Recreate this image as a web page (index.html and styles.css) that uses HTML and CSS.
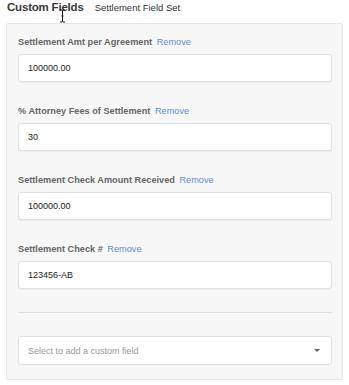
FILE: index.html
```html
<!DOCTYPE html>
<html>
<head>
<meta charset="utf-8">
<link rel="stylesheet" href="styles.css">
</head>
<body>
<div class="page">
  <div class="header">
    <span class="title">Custom Fields</span>
    <span class="subtitle">Settlement Field Set</span>
    <svg class="cursor" width="7" height="14" viewBox="0 0 7 14"><path d="M1 1h2l0.5 0.5L4 1h2M3.5 1.5v11M1 13h2l0.5-0.5L4 13h2M2.5 7h2" stroke="#111" stroke-width="1" fill="none"/></svg>
  </div>
  <div class="panel">
    <div class="field">
      <div class="label">Settlement Amt per Agreement <a class="remove">Remove</a></div>
      <div class="input">100000.00</div>
    </div>
    <div class="field">
      <div class="label">% Attorney Fees of Settlement <a class="remove">Remove</a></div>
      <div class="input">30</div>
    </div>
    <div class="field">
      <div class="label">Settlement Check Amount Received <a class="remove">Remove</a></div>
      <div class="input">100000.00</div>
    </div>
    <div class="field">
      <div class="label">Settlement Check # <a class="remove">Remove</a></div>
      <div class="input">123456-AB</div>
    </div>
    <div class="divider"></div>
    <div class="select">
      <span class="placeholder">Select to add a custom field</span>
      <span class="caret"></span>
    </div>
  </div>
</div>
</body>
</html>
```
FILE: styles.css
```css
html, body {
  margin: 0;
  padding: 0;
  background: #ffffff;
}
body {
  font-family: "Liberation Sans", Arial, sans-serif;
  color: #333;
}
.page {
  width: 349px;
  height: 385px;
  position: relative;
}
.header {
  position: relative;
  display: flex;
  align-items: baseline;
  height: 23px;
  padding-left: 7px;
  box-sizing: border-box;
  padding-top: 1px;
}
.title {
  font-size: 11.5px;
  font-weight: bold;
  color: #3a3a3a;
  letter-spacing: -0.2px;
}
.subtitle {
  font-size: 9.5px;
  color: #333;
  margin-left: 11px;
}
.cursor {
  position: absolute;
  left: 59px;
  top: 9px;
}
.panel {
  margin-left: 6px;
  width: 337px;
  height: 357px;
  box-sizing: border-box;
  background: #f7f7f7;
  border: 1px solid #e6e6e6;
  border-radius: 2px;
  padding: 12px 10px 0 11px;
}
.field {
  margin-bottom: 23px;
}
.label {
  height: 12px;
  line-height: 12px;
  font-size: 9.2px;
  font-weight: bold;
  color: #666;
  margin-bottom: 6px;
  white-space: nowrap;
}
.remove {
  font-weight: normal;
  color: #5b8fd3;
  margin-left: 2px;
}
.input {
  height: 28px;
  box-sizing: border-box;
  background: #fff;
  border: 1px solid #e0e0e0;
  border-radius: 3px;
  box-shadow: 0 1px 1px rgba(0,0,0,0.04);
  font-size: 9px;
  color: #222;
  padding-left: 9px;
  display: flex;
  align-items: center;
}
.divider {
  border-top: 1px solid #dedede;
  margin-top: 1px;
  margin-bottom: 23px;
}
.select {
  height: 29px;
  box-sizing: border-box;
  background: #fff;
  border: 1px solid #e0e0e0;
  border-radius: 3px;
  display: flex;
  align-items: center;
  justify-content: space-between;
  padding: 0 11px 0 9px;
}
.placeholder {
  font-size: 9px;
  color: #9a9a9a;
}
.caret {
  width: 0;
  height: 0;
  border-left: 3px solid transparent;
  border-right: 3px solid transparent;
  border-top: 3px solid #666;
}
```
